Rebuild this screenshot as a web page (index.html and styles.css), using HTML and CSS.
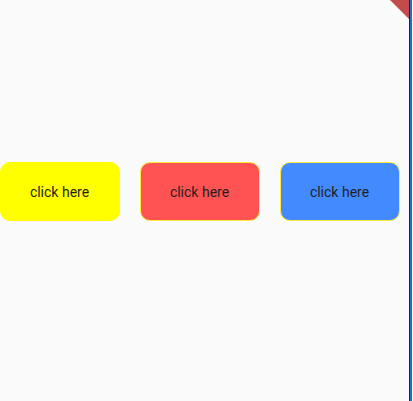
FILE: index.html
```html
<!DOCTYPE html>
<html>
<head>
<meta charset="utf-8">
<link rel="stylesheet" href="styles.css">
</head>
<body>
<div class="frame">
  <main class="app">
    <div class="row">
      <div class="btn btn-yellow">click here</div>
      <div class="btn btn-red">click here</div>
      <div class="btn btn-blue">click here</div>
    </div>
    <div class="banner"></div>
  </main>
  <div class="edge-dark"></div>
  <div class="edge-blue"></div>
  <div class="edge-light"></div>
</div>
</body>
</html>
```
FILE: styles.css
```css
html, body {
  margin: 0;
  padding: 0;
  background: #fafafa;
}
.frame {
  display: flex;
  width: 413px;
  height: 401px;
  overflow: hidden;
}
.app {
  position: relative;
  width: 409px;
  height: 401px;
  background: #fafafa;
  overflow: hidden;
}
.row {
  display: flex;
  gap: 20px;
  padding-top: 162px;
}
.btn {
  box-sizing: border-box;
  width: 120px;
  height: 59px;
  border-radius: 10px;
  border: 1px solid #ffeb3b;
  display: flex;
  align-items: center;
  justify-content: center;
  padding-right: 1px;
  font-family: Roboto, "Liberation Sans", sans-serif;
  font-size: 14px;
  color: #1f1f1f;
}
.btn-yellow { background: #ffff00; border-color: #ffff00; }
.btn-red { background: #ff5252; }
.btn-blue { background: #448aff; }
.banner {
  position: absolute;
  top: 0;
  right: 0;
  width: 19px;
  height: 19px;
  background: #c24b4b;
  clip-path: polygon(0 0, 100% 0, 100% 100%);
  filter: drop-shadow(0 0 2px rgba(0,0,0,0.3));
}
.edge-dark { width: 1px; background: #1d2733; }
.edge-blue { width: 2px; background: #1e6fd0; }
.edge-light { width: 1px; background: #fafafa; }
```
